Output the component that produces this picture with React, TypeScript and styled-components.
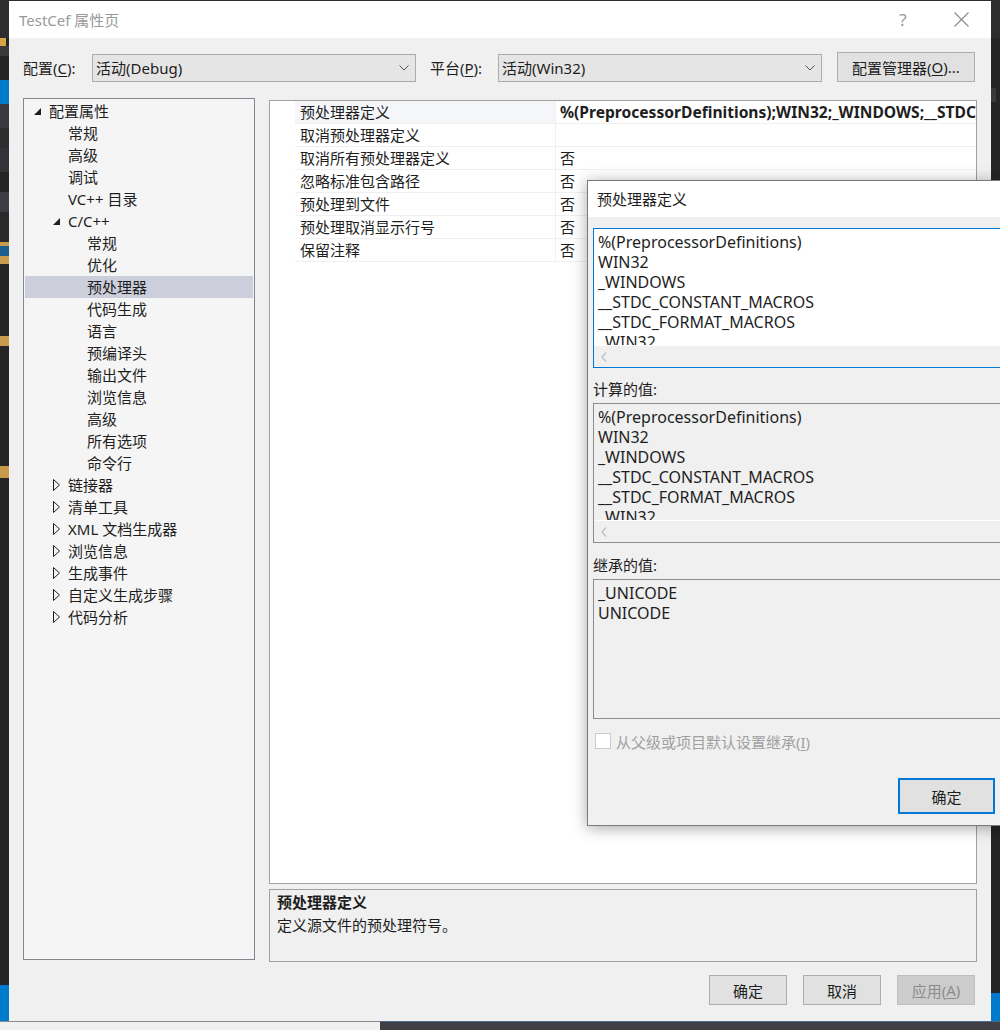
import React from "react";
import styled, { createGlobalStyle } from "styled-components";

const FONT = `"Noto Sans", "Noto Sans CJK SC", sans-serif`;

const Global = createGlobalStyle`
  html, body { margin: 0; padding: 0; background: #2d2d30; }
  body { font-family: ${FONT}; font-size: 15px; color: #1e1e1e; }
  * { box-sizing: border-box; }
`;

/* ---------- desktop frame ---------- */

const Desktop = styled.div`
  position: relative;
  width: 1000px;
  height: 1030px;
  overflow: hidden;
  background: #2d2d30;
  display: flex;
  flex-direction: column;
`;

const Upper = styled.div`
  display: flex;
  height: 1021px;
`;

const SideStrip = styled.div<{ $w: number }>`
  width: ${(p) => p.$w}px;
  flex-shrink: 0;
  display: flex;
  flex-direction: column;
  background: #252526;
  overflow: hidden;
`;

const StripBit = styled.div<{ $h: number; $c: string; $w?: number }>`
  height: ${(p) => p.$h}px;
  width: ${(p) => (p.$w ? `${p.$w}px` : "100%")};
  background: ${(p) => p.$c};
  flex-shrink: 0;
`;

const StripFill = styled.div`
  flex: 1;
`;

const BottomStrip = styled.div`
  display: flex;
  height: 9px;
`;

const BottomLight = styled.div`
  width: 380px;
  background: #f0f0f0;
  border-top: 1px solid #8a8a8a;
`;

const BottomDark = styled.div`
  flex: 1;
  background: #3f3f46;
  border-top: 1px solid #4a6a8a;
`;

/* ---------- property pages window ---------- */

const Window = styled.div`
  flex: 1;
  display: flex;
  flex-direction: column;
  background: #f0f0f0;
  border-top: 1px solid #2d2d30;
`;

const TitleBar = styled.div`
  height: 37px;
  background: #ffffff;
  display: flex;
  align-items: center;
  padding: 0 10px 0 10px;
`;

const TitleText = styled.div`
  flex: 1;
  color: #999999;
  font-size: 15px;
  line-height: 20px;
`;

const CaptionButton = styled.div`
  width: 40px;
  height: 30px;
  display: flex;
  align-items: center;
  justify-content: center;
  color: #9a9a9a;
  font-size: 17px;
  & + & {
    margin-left: 18px;
  }
`;

const Body = styled.div`
  flex: 1;
  display: flex;
  flex-direction: column;
  padding: 0 14px 16px 14px;
  min-height: 0;
`;

const ConfigRow = styled.div`
  margin-top: 14px;
  height: 30px;
  display: flex;
  align-items: flex-end;
`;

const FieldLabel = styled.div<{ $w: number }>`
  width: ${(p) => p.$w}px;
  height: 28px;
  line-height: 28px;
  flex-shrink: 0;
`;

const Mn = styled.span`
  text-decoration: underline;
  text-underline-offset: 2px;
`;

const Select = styled.div`
  width: 324px;
  height: 28px;
  background: #e5e5e5;
  border: 1px solid #acacac;
  display: flex;
  align-items: center;
  padding: 0 6px 0 3px;
  margin-right: 14px;
`;

const SelectValue = styled.div`
  flex: 1;
  line-height: 20px;
`;

const PushButton = styled.div<{ $w: number; $h?: number; $disabled?: boolean }>`
  width: ${(p) => p.$w}px;
  height: ${(p) => p.$h ?? 30}px;
  flex-shrink: 0;
  display: flex;
  align-items: center;
  justify-content: center;
  background: ${(p) => (p.$disabled ? "#cccccc" : "#e1e1e1")};
  border: 1px solid ${(p) => (p.$disabled ? "#bfbfbf" : "#adadad")};
  color: ${(p) => (p.$disabled ? "#8c8c8c" : "#1e1e1e")};
`;

const Main = styled.div`
  flex: 1;
  margin-top: 16px;
  display: flex;
  gap: 14px;
  min-height: 0;
`;

/* ---------- category tree ---------- */

const Tree = styled.div`
  width: 232px;
  flex-shrink: 0;
  background: #f5f5f5;
  border: 1px solid #828790;
  padding: 1px;
  margin-bottom: 2px;
`;

const TreeRow = styled.div<{ $level: number; $selected?: boolean }>`
  height: 22px;
  display: flex;
  align-items: center;
  padding-left: ${(p) => 8 + p.$level * 19}px;
  background: ${(p) => (p.$selected ? "#cccedb" : "transparent")};
  line-height: 20px;
  white-space: nowrap;
`;

const Toggle = styled.div`
  width: 16px;
  height: 22px;
  flex-shrink: 0;
  display: flex;
  align-items: center;
`;

/* ---------- property grid ---------- */

const RightCol = styled.div`
  flex: 1;
  display: flex;
  flex-direction: column;
  gap: 5px;
  min-width: 0;
`;

const Grid = styled.div`
  flex: 1;
  margin-top: 2px;
  background: #ffffff;
  border: 1px solid #a0a0a0;
  overflow: hidden;
`;

const GridRow = styled.div`
  display: grid;
  grid-template-columns: 25px 260px 1fr;
  height: 23px;
`;

const NameCell = styled.div<{ $active?: boolean }>`
  grid-column: 2;
  padding-left: 5px;
  line-height: 22px;
  border-bottom: 1px solid #f0f0f0;
  background: ${(p) => (p.$active ? "#f4f6fa" : "#ffffff")};
  white-space: nowrap;
`;

const ValueCell = styled.div<{ $bold?: boolean }>`
  padding-left: 4px;
  line-height: 22px;
  font-size: ${(p) => (p.$bold ? 15.6 : 15)}px;
  border-bottom: 1px solid #f0f0f0;
  border-left: 1px solid #f0f0f0;
  font-weight: ${(p) => (p.$bold ? 700 : 400)};
  white-space: nowrap;
  overflow: hidden;
`;

const Description = styled.div`
  height: 73px;
  flex-shrink: 0;
  border: 1px solid #a0a0a0;
  background: #f0f0f0;
  padding: 1px 7px;
  line-height: 23px;
`;

const DescTitle = styled.div`
  font-weight: 700;
`;

const ButtonRow = styled.div`
  margin-top: 13px;
  height: 30px;
  display: flex;
  justify-content: flex-end;
  gap: 16px;
  padding-right: 2px;
`;

/* ---------- preprocessor definitions editor ---------- */

const Editor = styled.div`
  position: absolute;
  left: 587px;
  top: 180px;
  width: 420px;
  height: 646px;
  background: #f0f0f0;
  border: 1px solid #7a7a7a;
  box-shadow: 0 2px 14px rgba(0, 0, 0, 0.35);
  display: flex;
  flex-direction: column;
`;

const EditorTitle = styled.div`
  height: 36px;
  background: #ffffff;
  padding-left: 9px;
  line-height: 36px;
`;

const EditorBody = styled.div`
  flex: 1;
  display: flex;
  flex-direction: column;
  padding: 11px 0 0 5px;
`;

const ListBox = styled.div<{ $focused?: boolean }>`
  width: 410px;
  height: 140px;
  flex-shrink: 0;
  border: 1px solid ${(p) => (p.$focused ? "#0078d7" : "#8c8c8c")};
  background: ${(p) => (p.$focused ? "#ffffff" : "#f0f0f0")};
  display: flex;
  flex-direction: column;
`;

const ListText = styled.div`
  flex: 1;
  overflow: hidden;
  padding: 3px 4px;
  font-size: 16px;
  line-height: 20px;
  white-space: nowrap;
`;

const HScroll = styled.div`
  height: 22px;
  flex-shrink: 0;
  background: #f0f0f0;
  border-top: 1px solid #ffffff;
  display: flex;
  align-items: center;
  padding-left: 7px;
`;

const SectionLabel = styled.div<{ $gap?: number }>`
  margin-top: ${(p) => p.$gap ?? 11}px;
  margin-bottom: 4px;
  line-height: 20px;
`;

const CheckRow = styled.div`
  margin-top: 14px;
  height: 16px;
  display: flex;
  align-items: center;
  gap: 5px;
  padding-left: 2px;
  color: #a0a0a0;
`;

const CheckBox = styled.div`
  width: 16px;
  height: 16px;
  background: #ffffff;
  border: 1px solid #cccccc;
`;

const DefaultButton = styled.div`
  align-self: flex-end;
  margin-top: 29px;
  margin-right: 11px;
  width: 97px;
  height: 36px;
  background: #e1e1e1;
  border: 2px solid #0078d7;
  display: flex;
  align-items: center;
  justify-content: center;
`;

/* ---------- small drawings ---------- */

const Chevron = () => (
  <svg width="10" height="6" viewBox="0 0 10 6">
    <polyline points="0.5,0.5 5,5 9.5,0.5" fill="none" stroke="#555" strokeWidth="1" />
  </svg>
);

const CloseGlyph = () => (
  <svg width="15" height="15" viewBox="0 0 15 15">
    <line x1="0.5" y1="0.5" x2="14.5" y2="14.5" stroke="#8a8a8a" strokeWidth="1.1" />
    <line x1="14.5" y1="0.5" x2="0.5" y2="14.5" stroke="#8a8a8a" strokeWidth="1.1" />
  </svg>
);

const Expanded = () => (
  <svg width="9" height="9" viewBox="0 0 9 9" style={{ marginTop: 1 }}>
    <polygon points="8,1 8,8 1,8" fill="#1e1e1e" />
  </svg>
);

const Collapsed = () => (
  <svg width="8" height="12" viewBox="0 0 8 12" style={{ marginLeft: 1 }}>
    <polygon points="0.5,0.5 6.5,6 0.5,11.5" fill="none" stroke="#1e1e1e" strokeWidth="1" />
  </svg>
);

const ScrollLeft = () => (
  <svg width="6" height="10" viewBox="0 0 6 10">
    <polyline points="5,0.5 1,5 5,9.5" fill="none" stroke="#c2c2c2" strokeWidth="1.4" />
  </svg>
);

/* ---------- data ---------- */

type Node = { label: string; level: number; state?: "open" | "closed"; selected?: boolean };

const tree: Node[] = [
  { label: "配置属性", level: 0, state: "open" },
  { label: "常规", level: 1 },
  { label: "高级", level: 1 },
  { label: "调试", level: 1 },
  { label: "VC++ 目录", level: 1 },
  { label: "C/C++", level: 1, state: "open" },
  { label: "常规", level: 2 },
  { label: "优化", level: 2 },
  { label: "预处理器", level: 2, selected: true },
  { label: "代码生成", level: 2 },
  { label: "语言", level: 2 },
  { label: "预编译头", level: 2 },
  { label: "输出文件", level: 2 },
  { label: "浏览信息", level: 2 },
  { label: "高级", level: 2 },
  { label: "所有选项", level: 2 },
  { label: "命令行", level: 2 },
  { label: "链接器", level: 1, state: "closed" },
  { label: "清单工具", level: 1, state: "closed" },
  { label: "XML 文档生成器", level: 1, state: "closed" },
  { label: "浏览信息", level: 1, state: "closed" },
  { label: "生成事件", level: 1, state: "closed" },
  { label: "自定义生成步骤", level: 1, state: "closed" },
  { label: "代码分析", level: 1, state: "closed" },
];

const props: { name: string; value: string }[] = [
  {
    name: "预处理器定义",
    value: "%(PreprocessorDefinitions);WIN32;_WINDOWS;__STDC_CONSTANT_MACROS;__STDC_FORMAT_MACROS;_WIN32",
  },
  { name: "取消预处理器定义", value: "" },
  { name: "取消所有预处理器定义", value: "否" },
  { name: "忽略标准包含路径", value: "否" },
  { name: "预处理到文件", value: "否" },
  { name: "预处理取消显示行号", value: "否" },
  { name: "保留注释", value: "否" },
];

const defines = [
  "%(PreprocessorDefinitions)",
  "WIN32",
  "_WINDOWS",
  "__STDC_CONSTANT_MACROS",
  "__STDC_FORMAT_MACROS",
  "_WIN32",
];

const inherited = ["_UNICODE", "UNICODE"];

export default function App() {
  return (
    <Desktop>
      <Global />
      <Upper>
        <SideStrip $w={9}>
          <StripBit $h={38} $c="#2d2d30" />
          <StripBit $h={8} $c="#d9a441" $w={6} />
          <StripBit $h={10} $c="#3a3a3d" />
          <StripBit $h={24} $c="#252526" />
          <StripBit $h={24} $c="#007acc" />
          <StripBit $h={24} $c="#3a3a3e" />
          <StripBit $h={20} $c="#2d2d30" />
          <StripBit $h={24} $c="#333337" />
          <StripBit $h={20} $c="#252526" />
          <StripBit $h={20} $c="#3e3e42" />
          <StripBit $h={30} $c="#2a2a2c" />
          <StripBit $h={4} $c="#c89a4c" />
          <StripBit $h={10} $c="#1c5f8f" />
          <StripBit $h={8} $c="#c89a4c" />
          <StripBit $h={72} $c="#252526" />
          <StripBit $h={10} $c="#c89a4c" />
          <StripBit $h={120} $c="#252526" />
          <StripBit $h={12} $c="#c89a4c" />
          <StripFill />
          <StripBit $h={30} $c="#252526" />
          <StripBit $h={36} $c="#007acc" />
        </SideStrip>

        <Window>
          <TitleBar>
            <TitleText>TestCef 属性页</TitleText>
            <CaptionButton>?</CaptionButton>
            <CaptionButton>
              <CloseGlyph />
            </CaptionButton>
          </TitleBar>

          <Body>
            <ConfigRow>
              <FieldLabel $w={69}>
                配置(<Mn>C</Mn>):
              </FieldLabel>
              <Select>
                <SelectValue>活动(Debug)</SelectValue>
                <Chevron />
              </Select>
              <FieldLabel $w={68}>
                平台(<Mn>P</Mn>):
              </FieldLabel>
              <Select>
                <SelectValue>活动(Win32)</SelectValue>
                <Chevron />
              </Select>
              <PushButton $w={138} style={{ marginLeft: 1 }}>
                配置管理器(<Mn>O</Mn>)...
              </PushButton>
            </ConfigRow>

            <Main>
              <Tree>
                {tree.map((n, i) => (
                  <TreeRow key={i} $level={n.level} $selected={n.selected}>
                    <Toggle>
                      {n.state === "open" && <Expanded />}
                      {n.state === "closed" && <Collapsed />}
                    </Toggle>
                    {n.label}
                  </TreeRow>
                ))}
              </Tree>

              <RightCol>
                <Grid>
                  {props.map((p, i) => (
                    <GridRow key={p.name}>
                      <NameCell $active={i === 0}>{p.name}</NameCell>
                      <ValueCell $bold={i === 0}>{p.value}</ValueCell>
                    </GridRow>
                  ))}
                </Grid>
                <Description>
                  <DescTitle>预处理器定义</DescTitle>
                  <div>定义源文件的预处理符号。</div>
                </Description>
              </RightCol>
            </Main>

            <ButtonRow>
              <PushButton $w={78}>确定</PushButton>
              <PushButton $w={78}>取消</PushButton>
              <PushButton $w={78} $disabled>
                应用(<Mn>A</Mn>)
              </PushButton>
            </ButtonRow>
          </Body>
        </Window>

        <SideStrip $w={9}>
          <StripBit $h={38} $c="#2d2d30" />
          <StripBit $h={50} $c="#252526" />
          <StripBit $h={14} $c="#3a3a3d" $w={5} />
          <StripFill />
          <StripBit $h={28} $c="#007acc" />
        </SideStrip>
      </Upper>

      <BottomStrip>
        <BottomLight />
        <BottomDark />
      </BottomStrip>

      <Editor>
        <EditorTitle>预处理器定义</EditorTitle>
        <EditorBody>
          <ListBox $focused>
            <ListText>
              {defines.map((d) => (
                <div key={d}>{d}</div>
              ))}
            </ListText>
            <HScroll>
              <ScrollLeft />
            </HScroll>
          </ListBox>

          <SectionLabel>计算的值:</SectionLabel>
          <ListBox>
            <ListText>
              {defines.map((d) => (
                <div key={d}>{d}</div>
              ))}
            </ListText>
            <HScroll>
              <ScrollLeft />
            </HScroll>
          </ListBox>

          <SectionLabel $gap={12}>继承的值:</SectionLabel>
          <ListBox>
            <ListText>
              {inherited.map((d) => (
                <div key={d}>{d}</div>
              ))}
            </ListText>
          </ListBox>

          <CheckRow>
            <CheckBox />
            <span>
              从父级或项目默认设置继承(<Mn>I</Mn>)
            </span>
          </CheckRow>

          <DefaultButton>确定</DefaultButton>
        </EditorBody>
      </Editor>
    </Desktop>
  );
}
